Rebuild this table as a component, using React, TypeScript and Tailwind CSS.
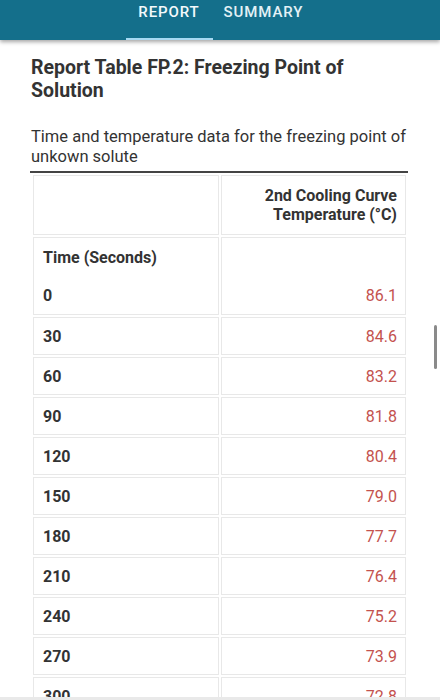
import React from "react";

const rows: [string, string][] = [
  ["30", "84.6"],
  ["60", "83.2"],
  ["90", "81.8"],
  ["120", "80.4"],
  ["150", "79.0"],
  ["180", "77.7"],
  ["210", "76.4"],
  ["240", "75.2"],
  ["270", "73.9"],
  ["300", "72.8"],
];

const cell = "border border-[#e8e8e8] bg-white";

export default function App() {
  return (
    <div
      className="relative w-[440px] h-[700px] overflow-hidden bg-white text-[#333333]"
      style={{ fontFamily: "Roboto, 'Liberation Sans', sans-serif" }}
    >
      {/* top tab bar */}
      <div className="relative z-10 h-[40px] bg-[#146f8b] shadow-[0_2px_4px_rgba(0,0,0,0.35)] flex justify-center">
        <div className="flex">
          <div className="relative w-[87px] flex justify-center">
            <span className="mt-[3px] text-[15px] leading-[18px] font-medium tracking-[0.9px] text-[#f4fafc]">
              REPORT
            </span>
            <div className="absolute left-0 right-0 bottom-0 h-[2px] bg-[#a6d9f2]" />
          </div>
          <div className="w-[102px] flex justify-center">
            <span className="mt-[3px] text-[15px] leading-[18px] font-medium tracking-[0.9px] text-[#e3f1f6]">
              SUMMARY
            </span>
          </div>
        </div>
      </div>

      {/* content */}
      <div className="w-[378px] ml-[30px] pt-[16px]">
        <h1 className="pl-[1px] text-[19.5px] leading-[23px] font-bold text-[#333333]">
          Report Table FP.2: Freezing Point of Solution
        </h1>
        <p className="mt-[25px] pl-[1px] pb-[4px] text-[16.5px] leading-[20px] text-[#333333] border-b-2 border-[#444444]">
          Time and temperature data for the freezing point of unkown solute
        </p>

        <div className="ml-[3px] mr-[2px] mt-[2px] grid grid-cols-[186px_185px] gap-[2px] text-[16px] leading-[19px]">
          <div className={`${cell} h-[60px]`} />
          <div className={`${cell} h-[60px] flex items-center justify-end pr-[8px] text-right font-bold`}>
            <span>
              2nd Cooling Curve
              <br />
              Temperature (°C)
            </span>
          </div>

          <div className={`${cell} h-[78px] flex flex-col font-bold pl-[9px]`}>
            <div className="h-[38px] flex items-center">Time (Seconds)</div>
            <div className="h-[38px] flex items-center">0</div>
          </div>
          <div className={`${cell} h-[78px] flex flex-col justify-end pr-[8px]`}>
            <div className="h-[38px] flex items-center justify-end text-[#c4524e]">86.1</div>
          </div>

          {rows.map(([t, v]) => (
            <React.Fragment key={t}>
              <div className={`${cell} h-[38px] flex items-center pl-[9px] font-bold`}>{t}</div>
              <div className={`${cell} h-[38px] flex items-center justify-end pr-[8px] text-[#c4524e]`}>
                {v}
              </div>
            </React.Fragment>
          ))}
        </div>
      </div>

      {/* scrollbar */}
      <div className="absolute left-[434px] top-[325px] w-[3px] h-[44px] rounded-full bg-[#8a8a8a]" />

      {/* bottom strip */}
      <div className="absolute left-0 right-0 bottom-0 h-[3px] bg-[#e9e9e9]" />
    </div>
  );
}
